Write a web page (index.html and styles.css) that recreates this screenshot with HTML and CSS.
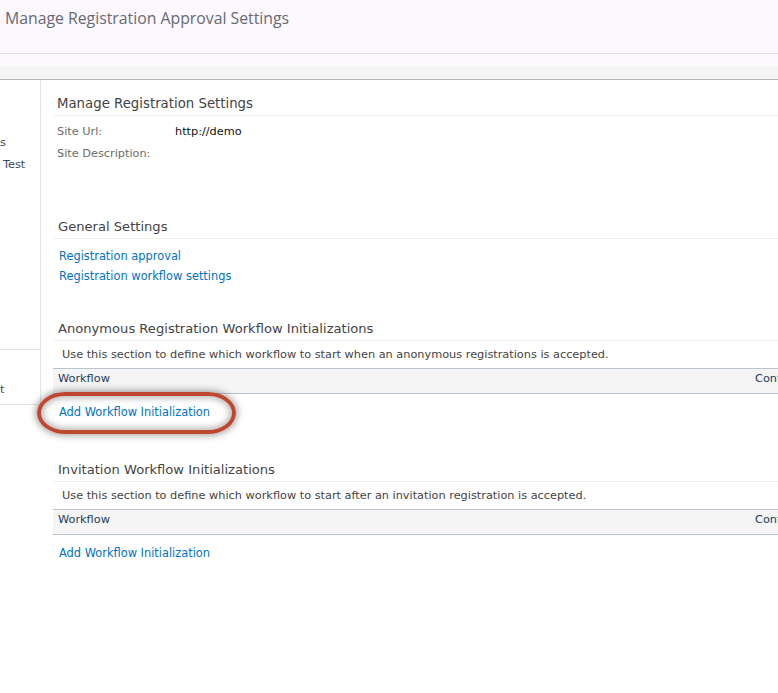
FILE: index.html
```html
<!DOCTYPE html>
<html>
<head>
<meta charset="utf-8">
<link rel="stylesheet" href="styles.css">
</head>
<body>
<header class="top">
  <h1 class="title">Manage Registration Approval Settings</h1>
</header>
<div class="strip"></div>
<div class="band"></div>
<div class="layout">
  <nav class="nav">
    <div class="nav-group">
      <div class="nav-item nav-s">s</div>
      <div class="nav-item nav-test">Test</div>
    </div>
    <div class="nav-group2">
      <div class="nav-item nav-t">t</div>
    </div>
  </nav>
  <main class="main">
    <section class="sec sec-first">
      <h2 class="sec-head">Manage Registration Settings</h2>
      <div class="field"><span class="label">Site Url:</span><span class="value">http://demo</span></div>
      <div class="field"><span class="label">Site Description:</span><span class="value"></span></div>
    </section>
    <section class="sec sec-general">
      <h2 class="sec-head">General Settings</h2>
      <a class="link" href="#">Registration approval</a>
      <a class="link" href="#">Registration workflow settings</a>
    </section>
    <section class="sec sec-anon">
      <h2 class="sec-head">Anonymous Registration Workflow Initializations</h2>
      <p class="desc">Use this section to define which workflow to start when an anonymous registrations is accepted.</p>
      <div class="thead"><span class="th">Workflow</span><span class="th">Configuration</span></div>
      <div class="add-wrap">
        <a class="link add" href="#">Add Workflow Initialization</a>
        <div class="ring"></div>
      </div>
    </section>
    <section class="sec sec-inv">
      <h2 class="sec-head">Invitation Workflow Initializations</h2>
      <p class="desc">Use this section to define which workflow to start after an invitation registration is accepted.</p>
      <div class="thead"><span class="th">Workflow</span><span class="th">Configuration</span></div>
      <div class="add-wrap">
        <a class="link add" href="#">Add Workflow Initialization</a>
      </div>
    </section>
  </main>
</div>
</body>
</html>
```
FILE: styles.css
```css
html, body {
  margin: 0;
  padding: 0;
  background: #ffffff;
  overflow: hidden;
}
body {
  font-family: "DejaVu Sans", Verdana, sans-serif;
  font-size: 11px;
  color: #444;
  width: 778px;
  height: 693px;
}
.top {
  height: 54px;
  background: #fdf8fd;
  border-bottom: 1px solid #e2e0e2;
  box-sizing: border-box;
}
.title {
  margin: 0;
  padding: 7px 0 0 5px;
  font-family: "Open Sans", "DejaVu Sans", sans-serif;
  font-weight: normal;
  font-size: 15.8px;
  line-height: 22px;
  color: #656a76;
}
.strip {
  height: 13px;
  background: #fdf8fd;
}
.band {
  height: 12px;
  background: #f5f5f5;
  border-bottom: 1px solid #b6b6b6;
}
.layout {
  display: flex;
}
.nav {
  width: 41px;
  flex: none;
  overflow: hidden;
  white-space: nowrap;
}
.nav-group {
  border-right: 1px solid #e3e3e3;
  border-bottom: 1px solid #e3e3e3;
  height: 270px;
  box-sizing: border-box;
  padding-top: 56px;
}
.nav-group2 {
  border-right: 1px solid #e3e3e3;
  border-bottom: 1px solid #e3e3e3;
  height: 55px;
  box-sizing: border-box;
  padding-top: 33px;
}
.nav-item {
  color: #2f4a68;
  font-size: 11.3px;
  height: 22px;
  line-height: 14px;
}
.nav-s { padding-left: 0; }
.nav-test { padding-left: 3px; }
.nav-t { padding-left: 0; }
.main {
  flex: 1;
  padding-left: 12px;
  min-width: 0;
}
.sec-head {
  margin: 0;
  font-weight: normal;
  font-size: 13.1px;
  color: #444;
  padding: 1px 0 3px 5px;
  line-height: 16px;
  border-bottom: 1px solid #f0f0f0;
}
.sec-first { padding-top: 15px; }
.sec-first .sec-head { padding-left: 4px; margin-bottom: 9px; font-size: 13.3px; }
.field {
  display: flex;
  height: 22px;
  line-height: 14px;
  padding-left: 4px;
  font-size: 11.3px;
}
.label {
  width: 118px;
  color: #6b6b6b;
}
.value { color: #111; }
.sec-general { padding-top: 49px; }
.sec-general .sec-head { margin-bottom: 10px; }
.link {
  display: block;
  color: #0072c6;
  text-decoration: none;
  font-size: 11.4px;
  height: 20px;
  line-height: 14px;
  padding-left: 6px;
}
.sec-anon { padding-top: 31px; }
.desc {
  margin: 0;
  padding: 7px 0 0 9px;
  height: 27px;
  box-sizing: border-box;
  font-size: 11.3px;
  color: #444;
  line-height: 14px;
}
.thead {
  display: grid;
  grid-template-columns: 697px 200px;
  background: #f5f5f5;
  border-top: 1px solid #b9c3cd;
  border-bottom: 1px solid #b9c3cd;
  height: 26px;
  box-sizing: border-box;
  padding-top: 3px;
  align-items: start;
  line-height: 14px;
  white-space: nowrap;
  width: 940px;
}
.th {
  color: #1c3b5d;
  font-size: 11.3px;
  padding-left: 5px;
}
.add-wrap {
  position: relative;
  padding-top: 11px;
  height: 67px;
  box-sizing: border-box;
}
.add { height: 14px; }
.ring {
  position: absolute;
  left: -16px;
  top: -2px;
  width: 199px;
  height: 42px;
  box-sizing: border-box;
  border: 4px solid #c0472f;
  border-radius: 28px / 21px;
  box-shadow: 0 0 6px 2px rgba(90, 90, 90, 0.5), inset 0 0 6px 2px rgba(90, 90, 90, 0.45);
}
```
